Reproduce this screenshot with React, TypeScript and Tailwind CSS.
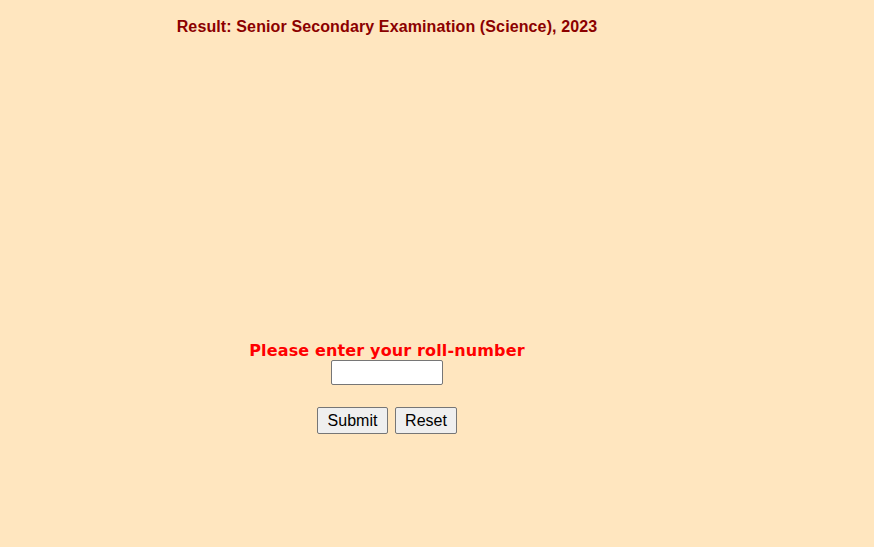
export default function App() {
  return (
    <div className="min-h-[547px] bg-[#ffe6bf] font-['Liberation_Sans',Arial,sans-serif]">
      <div className="w-[774px]">
        <h1 className="pt-[18px] text-center text-[16px] font-bold leading-[18px] tracking-[0.12px] text-[#8b0000]">
          Result: Senior Secondary Examination (Science), 2023
        </h1>
        <form className="mt-[306px] flex flex-col items-center">
          <p className="font-['DejaVu_Sans',Verdana,sans-serif] text-[16px] font-bold leading-[18px] tracking-[0.14px] text-[#ff0000]">
            Please enter your roll-number
          </p>
          <input
            type="text"
            className="h-[25px] w-[112px] rounded-[2px] border border-[#767676] bg-white px-1"
          />
          <div className="mt-[22px] flex gap-[7px]">
            <button
              type="button"
              className="h-[27px] w-[71px] rounded-[2px] border border-[#767676] bg-[#efefef] text-[16px] text-black"
            >
              Submit
            </button>
            <button
              type="reset"
              className="h-[27px] w-[62px] rounded-[2px] border border-[#767676] bg-[#efefef] text-[16px] text-black"
            >
              Reset
            </button>
          </div>
        </form>
      </div>
    </div>
  );
}
